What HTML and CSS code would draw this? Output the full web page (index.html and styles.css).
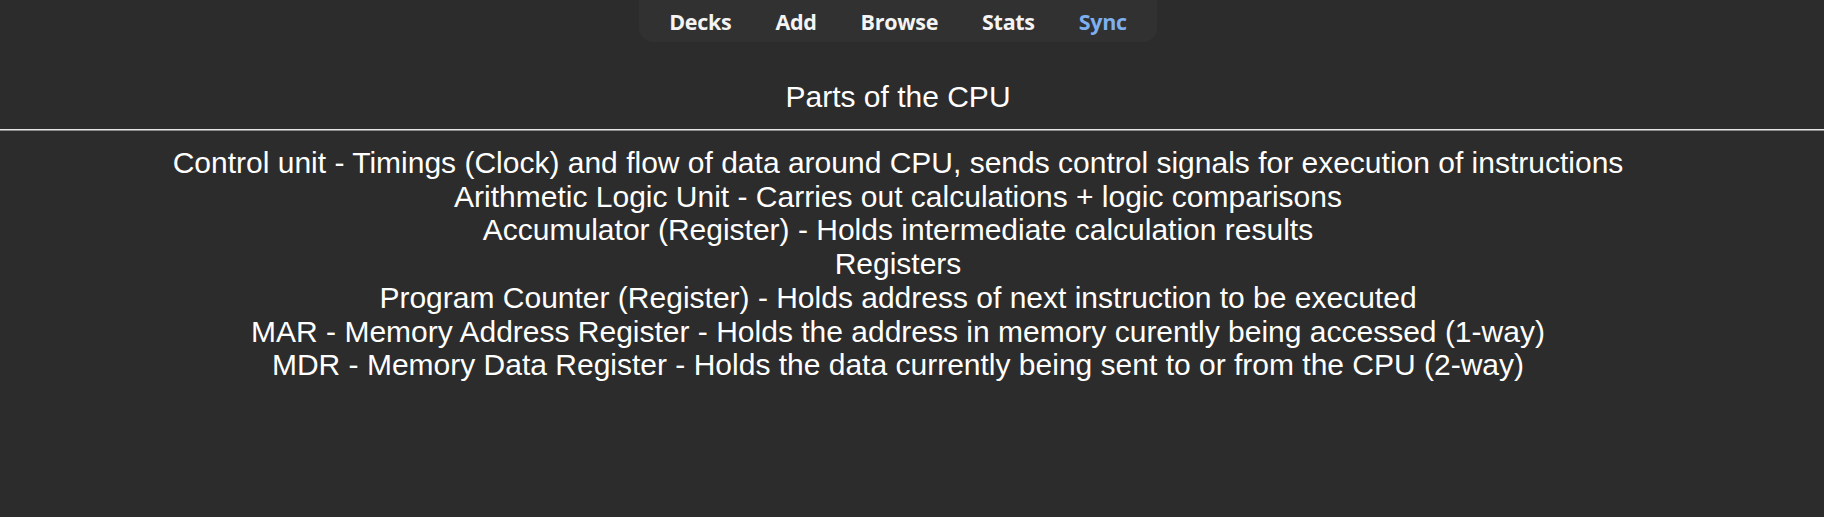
FILE: index.html
```html
<!DOCTYPE html>
<html>
<head>
<meta charset="utf-8">
<link rel="stylesheet" href="styles.css">
</head>
<body>
<div class="top">
  <nav class="nav">
    <a class="nav-item">Decks</a>
    <a class="nav-item">Add</a>
    <a class="nav-item">Browse</a>
    <a class="nav-item">Stats</a>
    <a class="nav-item sync">Sync</a>
  </nav>
</div>
<main class="card">
  <div class="front">Parts of the CPU</div>
  <hr class="answer">
  <div class="back">
    <div>Control unit - Timings (Clock) and flow of data around CPU, sends control signals for execution of instructions</div>
    <div>Arithmetic Logic Unit - Carries out calculations + logic comparisons</div>
    <div>Accumulator (Register) - Holds intermediate calculation results</div>
    <div>Registers</div>
    <div>Program Counter (Register) - Holds address of next instruction to be executed</div>
    <div>MAR - Memory Address Register - Holds the address in memory curently being accessed (1-way)</div>
    <div>MDR - Memory Data Register - Holds the data currently being sent to or from the CPU (2-way)</div>
  </div>
</main>
</body>
</html>
```
FILE: styles.css
```css
html, body {
  margin: 0;
  padding: 0;
  background: #2c2c2c;
  height: 100%;
}
body {
  color: #ffffff;
  font-family: "Liberation Sans", Arial, sans-serif;
}
.top {
  display: flex;
  justify-content: center;
  padding-right: 28px;
}
.nav {
  display: flex;
  align-items: center;
  height: 42px;
  padding: 0 8px 0 8px;
  background: #313131;
  border-radius: 0 0 14px 14px;
}
.nav-item {
  font-family: "Open Sans", "Noto Sans", sans-serif;
  font-weight: 700;
  font-size: 21.5px;
  color: #f4f4f4;
  padding: 1px 22px 0;
  letter-spacing: -0.3px;
}
.nav-item.sync {
  color: #7eb0f0;
}
.card {
  text-align: center;
  font-size: 30px;
  line-height: 33.75px;
}
.front {
  margin-top: 38px;
  padding-right: 28px;
}
.back {
  padding-right: 28px;
}
.answer {
  margin: 15px 0 15px;
  border: 0;
  border-top: 1px solid #e6e6e6;
  border-bottom: 1px solid #8a8a8a;
  height: 0;
}
```
